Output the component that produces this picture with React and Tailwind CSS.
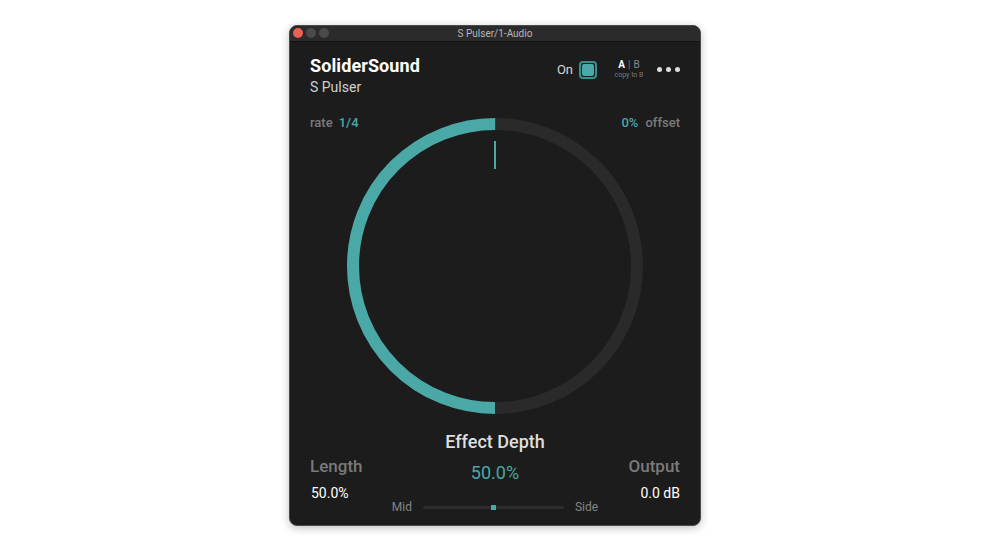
export default function App() {
  const teal = "#4aa8a6";
  const r = 142;
  const c = 2 * Math.PI * r;

  return (
    <div className="w-[991px] h-[557px] bg-white flex justify-center pt-[25px] font-['Roboto',sans-serif]">
      <div className="w-[412px] h-[501px] ml-[-1px] rounded-[8px] border border-[#4a4a4a] bg-[#1c1c1c] flex flex-col overflow-hidden shadow-[0_2px_8px_rgba(0,0,0,0.25)]">
        {/* title bar */}
        <div className="h-[16px] shrink-0 bg-[#2b2b2b] border-b border-[#111] relative flex items-center justify-center">
          <div className="absolute left-[3px] top-[2px] flex gap-[3px]">
            <span className="w-[10px] h-[10px] rounded-full bg-[#ec5f57]" />
            <span className="w-[10px] h-[10px] rounded-full bg-[#4a4a4a]" />
            <span className="w-[10px] h-[10px] rounded-full bg-[#4a4a4a]" />
          </div>
          <span className="text-[10px] leading-none text-[#b8b8b8]">S Pulser/1-Audio</span>
        </div>

        <div className="flex-1 px-5 flex flex-col">
          {/* header */}
          <div className="flex justify-between pt-[13px]">
            <div>
              <div className="text-[18px] leading-[22px] font-bold text-white tracking-[0.1px]">SoliderSound</div>
              <div className="text-[14px] leading-[18px] text-[#cfcfcf] mt-[1px]">S Pulser</div>
            </div>
            <div className="flex items-start pt-[5px]">
              <span className="text-[13px] leading-[18px] text-[#d8d8d8] mr-[6px] mt-[1px]">On</span>
              <span className="w-[18px] h-[18px] rounded-[4px] border-2 border-[#3a8f8d] p-[1px] flex mt-[1px]">
                <span className="flex-1 rounded-[2px]" style={{ background: teal }} />
              </span>
              <div className="ml-[16px] flex flex-col items-center w-[32px]">
                <div className="text-[10px] leading-[12px] mt-[-1px]">
                  <span className="font-bold text-white">A</span>
                  <span className="text-[#777] mx-[3px]">|</span>
                  <span className="text-[#8a8a8a]">B</span>
                </div>
                <span className="text-[7px] leading-[9px] text-[#7a7a7a] whitespace-nowrap">copy to B</span>
              </div>
              <div className="ml-[12px] mt-[7px] flex gap-[4px]">
                <span className="w-[5px] h-[5px] rounded-full bg-[#dcdcdc]" />
                <span className="w-[5px] h-[5px] rounded-full bg-[#dcdcdc]" />
                <span className="w-[5px] h-[5px] rounded-full bg-[#dcdcdc]" />
              </div>
            </div>
          </div>

          {/* rate / offset + ring */}
          <div className="relative mt-[20px] flex justify-center">
            <div className="absolute left-0 right-0 top-[-1px] flex justify-between text-[13px] leading-[16px] font-medium">
              <span>
                <span className="text-[#7b7b7b]">rate</span>
                <span className="ml-[6px]" style={{ color: teal }}>1/4</span>
              </span>
              <span>
                <span style={{ color: teal }}>0%</span>
                <span className="ml-[7px] text-[#7b7b7b]">offset</span>
              </span>
            </div>
            <svg width="300" height="300" viewBox="0 0 300 300" className="ml-[-1px]">
              <circle cx="150" cy="150" r={r} fill="none" stroke="#2a2a2a" strokeWidth="12" />
              <circle
                cx="150"
                cy="150"
                r={r}
                fill="none"
                stroke={teal}
                strokeWidth="12"
                strokeDasharray={`${c / 2} ${c}`}
                transform="rotate(90 150 150)"
              />
              <rect x="149" y="25" width="2" height="28" fill={teal} />
            </svg>
          </div>

          {/* effect depth */}
          <div className="mt-[15px] text-center text-[18px] leading-[22px] font-medium text-[#dedede]">Effect Depth</div>

          <div className="flex mt-[2px]">
            <div className="w-[80px]">
              <div className="text-[17px] leading-[22px] font-medium text-[#7a7a7a]">Length</div>
              <div className="text-[14px] leading-[16px] text-white mt-[8px] ml-[1px]">50.0%</div>
            </div>
            <div className="flex-1 flex flex-col items-center">
              <div className="text-[18px] leading-[24px] mt-[6px]" style={{ color: teal }}>50.0%</div>
              <div className="flex items-center mt-[14px] text-[12px] leading-[16px] text-[#858585]">
                <span>Mid</span>
                <div className="relative w-[141px] h-[3px] rounded-full bg-[#2c2c2c] mx-[11px]">
                  <span className="absolute left-[68px] top-[-1px] w-[5px] h-[5px]" style={{ background: teal }} />
                </div>
                <span>Side</span>
              </div>
            </div>
            <div className="w-[80px] flex flex-col items-end">
              <div className="text-[17px] leading-[22px] font-medium text-[#7a7a7a]">Output</div>
              <div className="text-[14px] leading-[16px] text-white mt-[8px]">0.0 dB</div>
            </div>
          </div>
        </div>
      </div>
    </div>
  );
}
